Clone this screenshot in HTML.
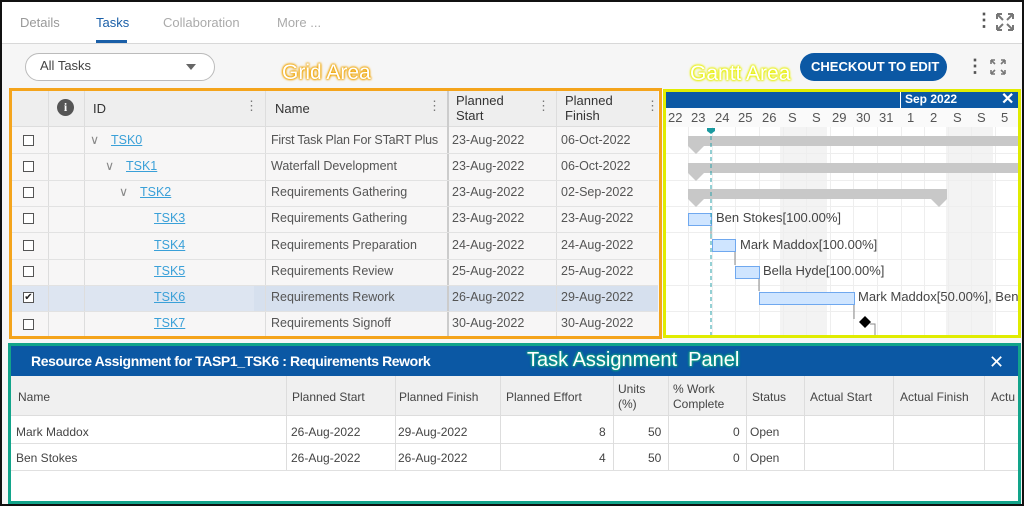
<!DOCTYPE html>
<html><head><meta charset="utf-8"><style>
*{box-sizing:border-box;margin:0;padding:0}
body{width:1024px;height:506px;position:relative;overflow:hidden;font-family:"Liberation Sans",sans-serif;background:#fff}
.a{position:absolute}
.t{position:absolute;white-space:nowrap}
.lnk{color:#3aa0d8;text-decoration:underline}
.cb{position:absolute;width:11px;height:11px;border:1px solid #555;background:#fff}
.lab{position:absolute;font-size:21px;color:#fff;white-space:nowrap}
</style></head><body>
<div class="a" style="left:0;top:0;width:1024px;height:506px;border:2px solid #111;z-index:50;pointer-events:none"></div>
<div class="a" style="left:0;top:43px;width:1024px;height:463px;background:#f6f6f6;border-top:1px solid #d8d8d8"></div>
<div class="t" style="left:20px;top:15px;font-size:13px;color:#999">Details</div>
<div class="t" style="left:96px;top:15px;font-size:13px;color:#1a5fa8">Tasks</div>
<div class="a" style="left:96px;top:40px;width:31px;height:3px;background:#1a5fa8"></div>
<div class="t" style="left:163px;top:15px;font-size:13px;color:#aaa">Collaboration</div>
<div class="t" style="left:277px;top:15px;font-size:13px;color:#aaa">More ...</div>
<div class="t" style="left:975px;top:10px;font-size:18px;color:#555;font-weight:bold">⋮</div>
<svg class="a" style="left:995px;top:12px" width="20" height="20" viewBox="0 0 20 20" stroke="#777" stroke-width="2" fill="none"><path d="M2 2l6 6M2 2v5M2 2h5M18 2l-6 6M18 2v5M18 2h-5M2 18l6-6M2 18v-5M2 18h5M18 18l-6-6M18 18v-5M18 18h-5"/></svg>
<div class="a" style="left:25px;top:53px;width:190px;height:28px;border:1px solid #bbb;border-radius:14px;background:#fff"></div>
<div class="t" style="left:40px;top:58px;font-size:13px;color:#444">All Tasks</div>
<div class="a" style="left:186px;top:64px;border-left:5px solid transparent;border-right:5px solid transparent;border-top:6px solid #666"></div>
<div class="lab" style="left:282px;top:61px;text-shadow:0 0 2px #f0a500,0 0 2px #f0a500,0 0 2px #f0a500,0 0 3px #f0a500">Grid Area</div>
<div class="a" style="left:800px;top:53px;width:147px;height:28px;border-radius:14px;background:#0b58a4"></div>
<div class="t" style="left:811px;top:59px;font-size:13px;font-weight:bold;color:#fff">CHECKOUT TO EDIT</div>
<div class="t" style="left:966px;top:56px;font-size:18px;color:#555;font-weight:bold">⋮</div>
<svg class="a" style="left:989px;top:58px" width="18" height="18" viewBox="0 0 18 18" stroke="#777" stroke-width="1.6" fill="none"><path d="M2 2l4 4M2 2v4M2 2h4M16 2l-4 4M16 2v4M16 2h-4M2 16l4-4M2 16v-4M2 16h4M16 16l-4-4M16 16v-4M16 16h-4"/></svg>
<div class="lab" style="left:690px;top:62px;text-shadow:0 0 2px #e8f000,0 0 2px #e8f000,0 0 2px #e8f000,0 0 3px #e8f000;z-index:5">Gantt Area</div>

<div class="a" style="left:12px;top:91px;width:646px;height:245px;background:#f7f6f6"></div>
<div class="a" style="left:12px;top:91px;width:646px;height:36px;background:#eeeeee;border-bottom:1px solid #ddd"></div>
<div class="a" style="left:12px;top:285px;width:242px;height:26px;background:#dde5f1"></div>
<div class="a" style="left:254px;top:285px;width:404px;height:26px;background:#d6e0ee"></div>
<div class="a" style="left:48px;top:91px;width:1px;height:245px;background:#ddd"></div>
<div class="a" style="left:84px;top:91px;width:1px;height:245px;background:#ddd"></div>
<div class="a" style="left:265px;top:91px;width:1px;height:245px;background:#ddd"></div>
<div class="a" style="left:447px;top:91px;width:2px;height:245px;background:#ccc"></div>
<div class="a" style="left:556px;top:91px;width:1px;height:245px;background:#ddd"></div>
<div class="a" style="left:12px;top:153px;width:646px;height:1px;background:#e2e2e2"></div>
<div class="a" style="left:12px;top:180px;width:646px;height:1px;background:#e2e2e2"></div>
<div class="a" style="left:12px;top:206px;width:646px;height:1px;background:#e2e2e2"></div>
<div class="a" style="left:12px;top:232px;width:646px;height:1px;background:#e2e2e2"></div>
<div class="a" style="left:12px;top:259px;width:646px;height:1px;background:#e2e2e2"></div>
<div class="a" style="left:12px;top:285px;width:646px;height:1px;background:#e2e2e2"></div>
<div class="a" style="left:12px;top:311px;width:646px;height:1px;background:#e2e2e2"></div>
<div class="a" style="left:57px;top:99px;width:17px;height:17px;border-radius:50%;background:#555;color:#fff;font-size:12px;font-weight:bold;text-align:center;line-height:17px;font-family:'Liberation Serif',serif">i</div>
<div class="t" style="left:93px;top:101px;font-size:13px;color:#333">ID</div>
<div class="t" style="left:245px;top:98px;font-size:13px;color:#777">⋮</div>
<div class="t" style="left:275px;top:101px;font-size:13px;color:#333">Name</div>
<div class="t" style="left:428px;top:98px;font-size:13px;color:#777">⋮</div>
<div class="t" style="left:456px;top:93px;font-size:13px;color:#333;line-height:15px">Planned<br>Start</div>
<div class="t" style="left:537px;top:98px;font-size:13px;color:#777">⋮</div>
<div class="t" style="left:565px;top:93px;font-size:13px;color:#333;line-height:15px">Planned<br>Finish</div>
<div class="t" style="left:646px;top:98px;font-size:13px;color:#777">⋮</div>

<div style="font-size:12.5px;color:#555">
<div class="cb" style="left:23px;top:135px"></div><div class="t" style="left:90px;top:132px;color:#888">∨</div><div class="t lnk" style="left:111px;top:133px">TSK0</div><div class="t" style="left:271px;top:133px;letter-spacing:-0.2px">First Task Plan For STaRT Plus</div><div class="t" style="left:452px;top:133px">23-Aug-2022</div><div class="t" style="left:561px;top:133px">06-Oct-2022</div>
<div class="cb" style="left:23px;top:161px"></div><div class="t" style="left:105px;top:158px;color:#888">∨</div><div class="t lnk" style="left:126px;top:159px">TSK1</div><div class="t" style="left:271px;top:159px">Waterfall Development</div><div class="t" style="left:452px;top:159px">23-Aug-2022</div><div class="t" style="left:561px;top:159px">06-Oct-2022</div>
<div class="cb" style="left:23px;top:187px"></div><div class="t" style="left:119px;top:184px;color:#888">∨</div><div class="t lnk" style="left:140px;top:185px">TSK2</div><div class="t" style="left:271px;top:185px">Requirements Gathering</div><div class="t" style="left:452px;top:185px">23-Aug-2022</div><div class="t" style="left:561px;top:185px">02-Sep-2022</div>
<div class="cb" style="left:23px;top:213px"></div><div class="t lnk" style="left:154px;top:211px">TSK3</div><div class="t" style="left:271px;top:211px">Requirements Gathering</div><div class="t" style="left:452px;top:211px">23-Aug-2022</div><div class="t" style="left:561px;top:211px">23-Aug-2022</div>
<div class="cb" style="left:23px;top:240px"></div><div class="t lnk" style="left:154px;top:238px">TSK4</div><div class="t" style="left:271px;top:238px">Requirements Preparation</div><div class="t" style="left:452px;top:238px">24-Aug-2022</div><div class="t" style="left:561px;top:238px">24-Aug-2022</div>
<div class="cb" style="left:23px;top:266px"></div><div class="t lnk" style="left:154px;top:264px">TSK5</div><div class="t" style="left:271px;top:264px">Requirements Review</div><div class="t" style="left:452px;top:264px">25-Aug-2022</div><div class="t" style="left:561px;top:264px">25-Aug-2022</div>
<div class="cb" style="left:23px;top:292px;font-size:10px;line-height:9px;text-align:center;color:#222">✔</div><div class="t lnk" style="left:154px;top:290px">TSK6</div><div class="t" style="left:271px;top:290px">Requirements Rework</div><div class="t" style="left:452px;top:290px">26-Aug-2022</div><div class="t" style="left:561px;top:290px">29-Aug-2022</div>
<div class="cb" style="left:23px;top:319px"></div><div class="t lnk" style="left:154px;top:316px">TSK7</div><div class="t" style="left:271px;top:316px">Requirements Signoff</div><div class="t" style="left:452px;top:316px">30-Aug-2022</div><div class="t" style="left:561px;top:316px">30-Aug-2022</div>
</div>
<div class="a" style="left:9px;top:88px;width:653px;height:251px;border:3px solid #f4a41c"></div>

<div class="a" style="left:665px;top:91px;width:354px;height:246px;background:#fff;overflow:hidden">
 <div class="a" style="left:115px;top:36px;width:47px;height:210px;background:#f3f3f3"></div>
 <div class="a" style="left:281px;top:36px;width:47px;height:210px;background:#f3f3f3"></div>
 <svg class="a" style="left:0;top:0" width="354" height="246">
  <g stroke="#eee" stroke-width="1">
   <path d="M23.5 36V246M47.5 36V246M70.5 36V246M94.5 36V246M118.5 36V246M141.5 36V246M165.5 36V246M188.5 36V246M212.5 36V246M236.5 36V246M259.5 36V246M283.5 36V246M306.5 36V246M330.5 36V246"/>
   <path d="M0 62.5H354M0 89.5H354M0 115.5H354M0 141.5H354M0 168.5H354M0 194.5H354M0 220.5H354"/>
  </g>
  <rect x="0" y="0" width="354" height="17" fill="#0b58a4"/>
  <rect x="0" y="17" width="354" height="19" fill="#fafafa"/>
  <line x1="235.5" y1="0" x2="235.5" y2="17" stroke="#fff" stroke-width="1"/>
  <g fill="#c8c8c8">
   <rect x="23" y="45" width="340" height="10"/><path d="M23 55h16l-8 8z"/>
   <rect x="23" y="72" width="340" height="10"/><path d="M23 82h16l-8 8z"/>
   <rect x="23" y="98" width="259" height="10"/><path d="M23 108h16l-8 8zM266 108h16l-8 8z"/>
  </g>
  <g fill="#cfe5ff" stroke="#6fa8ef">
   <rect x="23.5" y="122.5" width="23" height="12"/>
   <rect x="47.5" y="148.5" width="23" height="12"/>
   <rect x="70.5" y="175.5" width="24" height="12"/>
   <rect x="94.5" y="201.5" width="95" height="12"/>
  </g>
  <g stroke="#888" fill="none"><path d="M46 135V148M70 161V174M94 188V200M189 214V228"/><path d="M205 233h5v15h-20"/></g>
  <path d="M200 225l6 6-6 6-6-6z" fill="#000"/>
  <line x1="46" y1="38" x2="46" y2="246" stroke="#2aa0a8" stroke-dasharray="4 3" stroke-width="1"/>
  <path d="M42 37h8v3l-4 3-4-3z" fill="#1a9aa0"/>
 </svg>
 <div class="t" style="left:240px;top:1px;font-size:12px;font-weight:bold;color:#fff">Sep 2022</div>
 <div class="t" style="left:336px;top:-2px;font-size:16px;font-weight:bold;color:#fff">✕</div>
 <div style="font-size:13px;color:#555">
  <div class="t" style="left:3px;top:19px">22</div><div class="t" style="left:26px;top:19px">23</div><div class="t" style="left:50px;top:19px">24</div><div class="t" style="left:73px;top:19px">25</div><div class="t" style="left:97px;top:19px">26</div><div class="t" style="left:123px;top:19px">S</div><div class="t" style="left:147px;top:19px">S</div><div class="t" style="left:167px;top:19px">29</div><div class="t" style="left:191px;top:19px">30</div><div class="t" style="left:214px;top:19px">31</div><div class="t" style="left:242px;top:19px">1</div><div class="t" style="left:265px;top:19px">2</div><div class="t" style="left:288px;top:19px">S</div><div class="t" style="left:312px;top:19px">S</div><div class="t" style="left:336px;top:19px">5</div>
  <div class="t" style="left:51px;top:119px;color:#444">Ben Stokes[100.00%]</div>
  <div class="t" style="left:75px;top:146px;color:#444">Mark Maddox[100.00%]</div>
  <div class="t" style="left:98px;top:172px;color:#444">Bella Hyde[100.00%]</div>
  <div class="t" style="left:193px;top:198px;color:#444">Mark Maddox[50.00%], Ben Stokes</div>
 </div>
</div>
<div class="a" style="left:663px;top:89px;width:358px;height:249px;border:3px solid #e0ec00"></div>

<div class="a" style="left:11px;top:346px;width:1007px;height:155px;background:#fff"></div>
<div class="a" style="left:11px;top:346px;width:1007px;height:30px;background:#0b58a4"></div>
<div class="t" style="left:31px;top:353px;font-size:14px;font-weight:bold;color:#fff;letter-spacing:-0.4px">Resource Assignment for TASP1_TSK6 : Requirements Rework</div>
<div class="lab" style="left:527px;top:349px;font-size:20px;text-shadow:0 0 2px #14a085,0 0 2px #14a085,0 0 2px #14a085,0 0 3px #14a085">Task Assignment&nbsp; Panel</div>
<div class="t" style="left:989px;top:352px;font-size:18px;color:#fff">✕</div>
<div class="a" style="left:11px;top:376px;width:1007px;height:40px;background:#f0f0f0;border-bottom:1px solid #ddd"></div>
<div class="a" style="left:11px;top:443px;width:1007px;height:1px;background:#e0e0e0"></div>
<div class="a" style="left:11px;top:470px;width:1007px;height:1px;background:#e0e0e0"></div>
<div style="font-size:12px;color:#444">
<div class="a" style="left:286px;top:376px;width:1px;height:94px;background:#ddd"></div>
<div class="a" style="left:395px;top:376px;width:1px;height:94px;background:#ddd"></div>
<div class="a" style="left:500px;top:376px;width:1px;height:94px;background:#ddd"></div>
<div class="a" style="left:613px;top:376px;width:1px;height:94px;background:#ddd"></div>
<div class="a" style="left:668px;top:376px;width:1px;height:94px;background:#ddd"></div>
<div class="a" style="left:746px;top:376px;width:1px;height:94px;background:#ddd"></div>
<div class="a" style="left:804px;top:376px;width:1px;height:94px;background:#ddd"></div>
<div class="a" style="left:893px;top:376px;width:1px;height:94px;background:#ddd"></div>
<div class="a" style="left:984px;top:376px;width:1px;height:94px;background:#ddd"></div>
<div class="t" style="left:18px;top:390px">Name</div>
<div class="t" style="left:292px;top:390px">Planned Start</div>
<div class="t" style="left:399px;top:390px">Planned Finish</div>
<div class="t" style="left:506px;top:390px">Planned Effort</div>
<div class="t" style="left:618px;top:382px;line-height:15px">Units<br>(%)</div>
<div class="t" style="left:673px;top:382px;line-height:15px">% Work<br>Complete</div>
<div class="t" style="left:752px;top:390px">Status</div>
<div class="t" style="left:810px;top:390px">Actual Start</div>
<div class="t" style="left:900px;top:390px">Actual Finish</div>
<div class="t" style="left:991px;top:390px">Actu</div>
<div class="t" style="left:16px;top:425px">Mark Maddox</div><div class="t" style="left:291px;top:425px">26-Aug-2022</div><div class="t" style="left:398px;top:425px">29-Aug-2022</div><div class="t" style="left:599px;top:425px">8</div><div class="t" style="left:648px;top:425px">50</div><div class="t" style="left:733px;top:425px">0</div><div class="t" style="left:750px;top:425px">Open</div>
<div class="t" style="left:16px;top:451px">Ben Stokes</div><div class="t" style="left:291px;top:451px">26-Aug-2022</div><div class="t" style="left:398px;top:451px">26-Aug-2022</div><div class="t" style="left:599px;top:451px">4</div><div class="t" style="left:648px;top:451px">50</div><div class="t" style="left:733px;top:451px">0</div><div class="t" style="left:750px;top:451px">Open</div>
</div>
<div class="a" style="left:8px;top:343px;width:1013px;height:161px;border:3px solid #12a48a"></div>
</body></html>
